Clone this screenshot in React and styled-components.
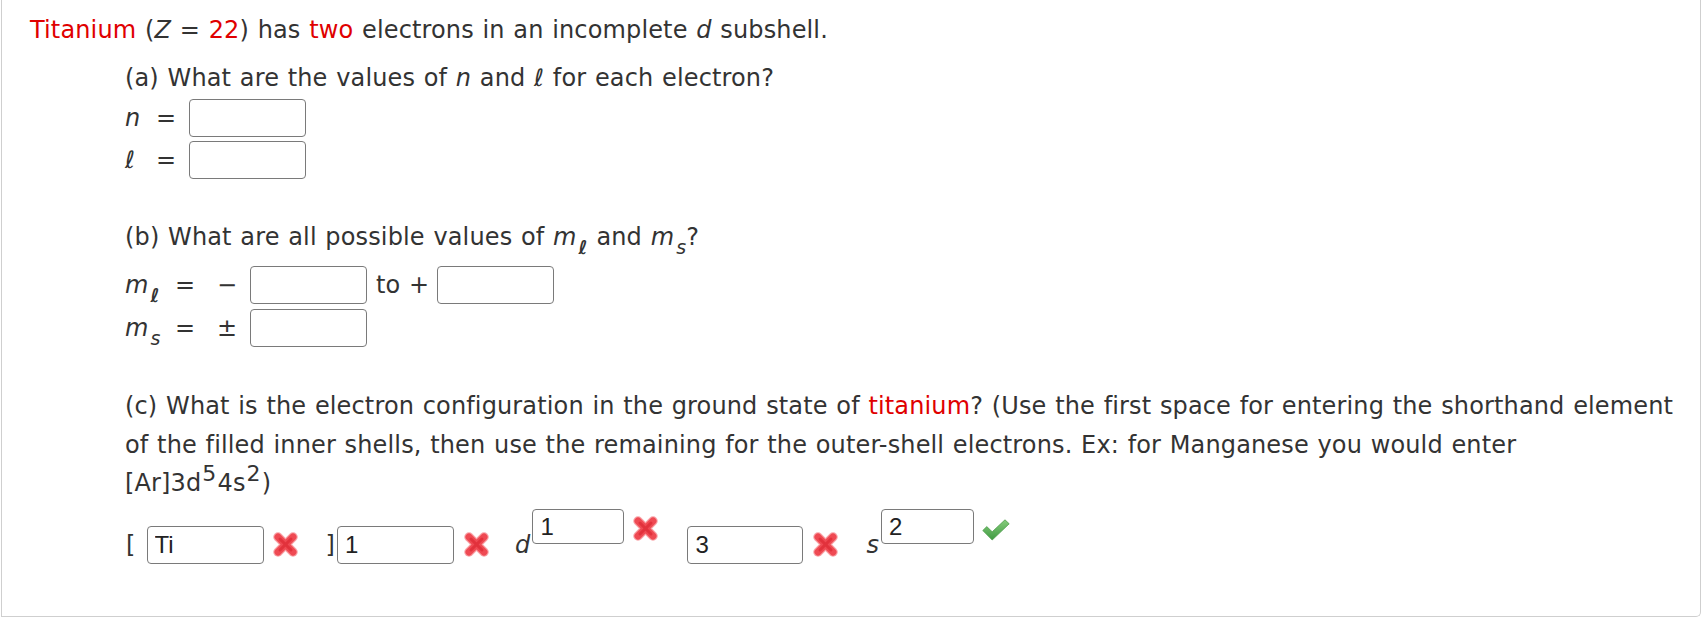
import React from "react";
import styled, { createGlobalStyle } from "styled-components";

const Global = createGlobalStyle`
  html, body { margin: 0; padding: 0; background: #ffffff; }
  body { font-family: "DejaVu Sans", Verdana, sans-serif; color: #333; }
`;

const Page = styled.div`
  padding-left: 1px;
`;

const Panel = styled.div`
  box-sizing: border-box;
  width: 1700px;
  height: 617px;
  border: 1px solid #cfcfcf;
  border-top: none;
  border-bottom-right-radius: 5px;
  padding: 11px 20px 0 28px;
  font-family: "DejaVu Sans", Verdana, sans-serif;
  font-size: 24px;
  line-height: 38.4px;
  color: #333;
  word-spacing: 0.9px;
  letter-spacing: 0.14px;
  background: #fff;
`;

const Intro = styled.p`
  margin: 0;
`;

const Part = styled.div`
  margin: ${(p) => p.$top}px 0 0 95px;
`;

const Question = styled.p`
  margin: 0;
  white-space: nowrap;
`;

const Red = styled.span`
  color: #e00000;
`;

const Var = styled.i`
  font-style: italic;
`;

const Sub = styled.span`
  font-size: 19px;
  font-style: italic;
  font-weight: ${(p) => (p.$bold ? 700 : 400)};
  line-height: 0;
  vertical-align: -9px;
  margin-left: 2px;
`;

const Sup = styled.sup`
  font-size: 22px;
  line-height: 0;
  vertical-align: 10px;
  margin: 0 1px;
`;

const Rows = styled.div`
  display: flex;
  flex-direction: column;
  gap: ${(p) => p.$gap}px;
  margin-top: ${(p) => p.$top}px;
`;

const Row = styled.div`
  display: flex;
  align-items: center;
  height: 38px;
  line-height: 38px;
`;

const Label = styled.span`
  display: inline-block;
  width: ${(p) => p.$w}px;
  white-space: nowrap;
`;

const Sym = styled.span`
  display: inline-block;
  width: ${(p) => p.$w}px;
  margin-left: ${(p) => p.$ml || 0}px;
  text-align: left;
`;

const Box = styled.input`
  box-sizing: border-box;
  width: ${(p) => p.$w}px;
  height: ${(p) => p.$h || 38}px;
  margin: ${(p) => p.$mt || 0}px 0 0 ${(p) => p.$ml || 0}px;
  border: 1px solid #7a7a7a;
  border-radius: 4px;
  padding: 0 0 0 7px;
  font-family: "Liberation Sans", Arial, sans-serif;
  font-size: 24px;
  color: #222;
  background: #fff;
  outline: none;
  flex: none;
`;

const ToText = styled.span`
  margin-left: 9px;
  width: 61px;
  display: inline-block;
  white-space: nowrap;
`;

const Answer = styled.div`
  display: flex;
  align-items: flex-start;
  height: 55px;
  margin-top: 7px;
`;

const Piece = styled.span`
  display: inline-block;
  line-height: 38px;
  margin: ${(p) => p.$mt || 0}px 0 0 ${(p) => p.$ml || 0}px;
  font-style: ${(p) => (p.$italic ? "italic" : "normal")};
  flex: none;
`;

const IconSlot = styled.span`
  display: inline-flex;
  flex: none;
  margin: ${(p) => p.$mt || 0}px 0 0 ${(p) => p.$ml || 0}px;
`;

const Cross = () => (
  <svg width="25" height="25" viewBox="0 0 25 25">
    <g strokeLinecap="round">
      <g stroke="#f9a3a8" strokeWidth="9.5">
        <line x1="5" y1="5" x2="20" y2="20" />
        <line x1="20" y1="5" x2="5" y2="20" />
      </g>
      <g stroke="#ef4a53" strokeWidth="7">
        <line x1="5" y1="5" x2="20" y2="20" />
        <line x1="20" y1="5" x2="5" y2="20" />
      </g>
      <g stroke="#e2323c" strokeWidth="3">
        <line x1="7" y1="7" x2="18" y2="18" />
        <line x1="18" y1="7" x2="7" y2="18" />
      </g>
    </g>
  </svg>
);

const Check = () => (
  <svg width="28" height="22" viewBox="0 0 28 22">
    <defs>
      <linearGradient id="chk" x1="0" y1="0" x2="0" y2="1">
        <stop offset="0" stopColor="#86cc7c" />
        <stop offset="1" stopColor="#3f9a42" />
      </linearGradient>
    </defs>
    <path
      d="M0.8 11.5 L4.8 7.6 L10.2 12.8 L23 0.8 L27.2 4.8 L10.2 21 Z"
      fill="url(#chk)"
      stroke="#4f9e4c"
      strokeWidth="0.8"
      strokeLinejoin="round"
    />
  </svg>
);

export default function App() {
  return (
    <Page>
      <Global />
      <Panel>
        <Intro>
          <Red>Titanium</Red> (<Var>Z</Var> = <Red>22</Red>) has <Red>two</Red> electrons in an
          incomplete <Var>d</Var> subshell.
        </Intro>

        <Part $top={10}>
          <Question>
            (a) What are the values of <Var>n</Var> and ℓ for each electron?
          </Question>
          <Rows $gap={4} $top={1}>
            <Row>
              <Label $w={31}>
                <Var>n</Var>
              </Label>
              <Sym $w={20}>=</Sym>
              <Box $w={117} $ml={13} readOnly value="" />
            </Row>
            <Row>
              <Label $w={31}>ℓ</Label>
              <Sym $w={20}>=</Sym>
              <Box $w={117} $ml={13} readOnly value="" />
            </Row>
          </Rows>
        </Part>

        <Part $top={39}>
          <Question>
            (b) What are all possible values of <Var>m</Var>
            <Sub $bold>ℓ</Sub> and <Var>m</Var>
            <Sub>s</Sub>?
          </Question>
          <Rows $gap={5} $top={10}>
            <Row>
              <Label $w={50}>
                <Var>m</Var>
                <Sub $bold>ℓ</Sub>
              </Label>
              <Sym $w={20}>=</Sym>
              <Sym $w={20} $ml={22}>−</Sym>
              <Box $w={117} $ml={13} readOnly value="" />
              <ToText>to +</ToText>
              <Box $w={117} readOnly value="" />
            </Row>
            <Row>
              <Label $w={50}>
                <Var>m</Var>
                <Sub>s</Sub>
              </Label>
              <Sym $w={20}>=</Sym>
              <Sym $w={20} $ml={22}>±</Sym>
              <Box $w={117} $ml={13} readOnly value="" />
            </Row>
          </Rows>
        </Part>

        <Part $top={40}>
          <Question>
            (c) What is the electron configuration in the ground state of <Red>titanium</Red>? (Use
            the first space for entering the shorthand element
            <br />
            of the filled inner shells, then use the remaining for the outer-shell electrons. Ex:
            for Manganese you would enter
            <br />
            [Ar]3d<Sup>5</Sup>4s<Sup>2</Sup>)
          </Question>
          <Answer>
            <Piece $mt={17} $ml={1}>[</Piece>
            <Box $w={117} $mt={17} $ml={11} readOnly value="Ti" />
            <IconSlot $mt={23} $ml={9}>
              <Cross />
            </IconSlot>
            <Piece $mt={17} $ml={28}>]</Piece>
            <Box $w={117} $mt={17} $ml={2} readOnly value="1" />
            <IconSlot $mt={23} $ml={10}>
              <Cross />
            </IconSlot>
            <Piece $mt={17} $ml={26} $italic>d</Piece>
            <Box $w={92} $h={35} $ml={2} readOnly value="1" />
            <IconSlot $mt={7} $ml={9}>
              <Cross />
            </IconSlot>
            <Box $w={116} $mt={17} $ml={29} readOnly value="3" />
            <IconSlot $mt={23} $ml={10}>
              <Cross />
            </IconSlot>
            <Piece $mt={17} $ml={28} $italic>s</Piece>
            <Box $w={93} $h={35} $ml={2} readOnly value="2" />
            <IconSlot $mt={10} $ml={8}>
              <Check />
            </IconSlot>
          </Answer>
        </Part>
      </Panel>
    </Page>
  );
}
